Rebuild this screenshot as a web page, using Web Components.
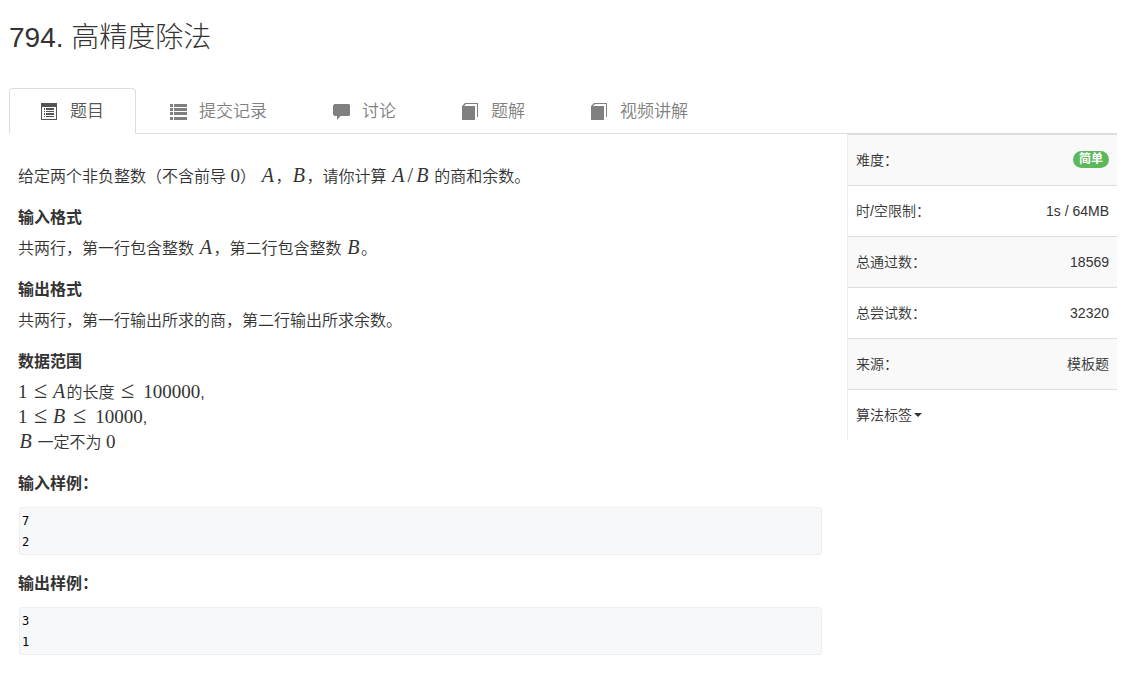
<!DOCTYPE html>
<html lang="zh-CN">
<head>
<meta charset="utf-8">
<meta name="viewport" content="width=device-width, initial-scale=1">
<title>794. 高精度除法</title>
<style>
body {
  margin: 0;
  background: #fff;
  color: #333;
  font-family: "Liberation Sans", "Noto Sans CJK SC", sans-serif;
  text-spacing-trim: space-all;
}
</style>
</head>
<body>
<problem-page></problem-page>

<script>
function define(name, html) {
  const template = document.createElement('template');
  template.innerHTML = html;
  customElements.define(name, class extends HTMLElement {
    constructor() {
      super();
      this.attachShadow({ mode: 'open' }).append(template.content.cloneNode(true));
    }
  });
}

/* Inline math pieces */
define('math-var', `
<style>
:host { display: inline-block; width: 15px; line-height: 16px; font-size: 20px; font-style: italic; font-family: "Liberation Serif", serif; text-align: center; }
</style><slot></slot>`);
define('math-num', `
<style>
:host { display: inline; line-height: 16px; font-size: 19px; font-family: "Liberation Serif", serif; }
</style><slot></slot>`);
define('math-op', `
<style>
:host { display: inline-block; width: 9px; line-height: 16px; font-size: 20px; font-family: "Liberation Serif", serif; text-align: center; }
</style><slot></slot>`);
define('math-rel', `
<style>
:host { display: inline-block; width: 14px; margin: 0 4px 0 6px; line-height: 16px; font-size: 24px; font-family: "Liberation Serif", serif; text-align: center; }
</style><slot></slot>`);

/* Tab icons */
const icons = {
  problem: '<path fill-rule="evenodd" d="M0 0h16v17H0zM1 4v12h14V4z"/><path d="M3 5h1v2H3zM5 5h8v2H5zM3 8h1v1H3zM5 8h8v1H5zM3 10h1v2H3zM5 10h8v2H5zM3 13h1v1H3zM5 13h8v1H5z"/>',
  list: '<path d="M0 1h3v3H0zM4 1h13v3H4zM0 5h3v3H0zM4 5h13v3H4zM0 9h3v3H0zM4 9h13v3H4zM0 14h3v3H0zM4 14h13v3H4z"/>',
  comment: '<path d="M1.500 1h14.500l1.500 1.500v9L16 13H7.500L4 17v-4H1.500L0 11.500v-9z"/>',
  book: '<path d="M3 0h13v14h-1V1H4L2 3h11v14H0V3z"/>'
};
customElements.define('tab-icon', class extends HTMLElement {
  connectedCallback() {
    if (this.shadowRoot) return;
    this.attachShadow({ mode: 'open' }).innerHTML = `
      <style>:host { display: block; width: 17px; height: 18px; } svg { display: block; fill: currentColor; }</style>
      <svg width="17" height="17" viewBox="0 0 17 17" aria-hidden="true">${icons[this.getAttribute('name')]}</svg>`;
  }
});

define('page-tabs', `
<style>
:host { display: block; border-bottom: 1px solid #ddd; }
nav { display: flex; gap: 2px; margin-bottom: -1px; }
a {
  display: flex; align-items: center; gap: 12px;
  padding: 11px 31px 9px;
  border: 1px solid transparent; border-radius: 4px 4px 0 0;
  color: #808080; font-size: 17px; line-height: 24px; font-weight: 350;
  text-decoration: none; white-space: nowrap;
}
a[aria-current] { color: #555; background: #fff; border-color: #ddd #ddd #fff; }
</style>
<nav>
  <a href="#problem" aria-current="page"><tab-icon name="problem"></tab-icon>题目</a>
  <a href="#submissions"><tab-icon name="list"></tab-icon>提交记录</a>
  <a href="#discussion"><tab-icon name="comment"></tab-icon>讨论</a>
  <a href="#solutions"><tab-icon name="book"></tab-icon>题解</a>
  <a href="#video"><tab-icon name="book"></tab-icon>视频讲解</a>
</nav>`);

define('sample-block', `
<style>
:host { display: block; margin: 0 0 0 1px; }
pre {
  margin: 0; padding: 3px 2px 1px; border: 1px solid #eee; border-radius: 3px;
  background: #f6f8fa; color: #000;
  font: 12px/21px "DejaVu Sans Mono", monospace;
}
</style>
<pre><slot></slot></pre>`);

define('problem-statement', `
<style>
:host { display: block; font-size: 16px; line-height: 25px; font-weight: 350; }
h2 { margin: 16px 0 6px; font-size: 16px; line-height: 25px; font-weight: bold; }
h2.sample { margin-bottom: 11px; }
p { margin: 0; }
</style>
<p>给定两个非负整数（不含前导 <math-num>0</math-num>） <math-var>A</math-var>，<math-var>B</math-var>，请你计算 <math-var>A</math-var><math-op>/</math-op><math-var>B</math-var> 的商和余数。</p>
<h2>输入格式</h2>
<p>共两行，第一行包含整数 <math-var>A</math-var>，第二行包含整数 <math-var>B</math-var>。</p>
<h2>输出格式</h2>
<p>共两行，第一行输出所求的商，第二行输出所求余数。</p>
<h2>数据范围</h2>
<p><math-num>1</math-num><math-rel>≤</math-rel><math-var>A</math-var>的长度<math-rel>≤</math-rel><math-num>100000</math-num>,<br>
<math-num>1</math-num><math-rel>≤</math-rel><math-var>B</math-var><math-rel>≤</math-rel><math-num>10000</math-num>,<br>
<math-var>B</math-var> 一定不为 <math-num>0</math-num></p>
<h2 class="sample">输入样例：</h2>
<sample-block>7
2</sample-block>
<h2 class="sample">输出样例：</h2>
<sample-block>3
1</sample-block>`);

define('level-badge', `
<style>
:host { display: inline-block; padding: 0 6px; border-radius: 10px; background: #5cb85c; color: #fff; font-size: 12px; line-height: 17px; font-weight: bold; vertical-align: 2px; }
</style><slot></slot>`);

define('problem-info', `
<style>
:host { display: block; border-left: 1px solid #eee; font-size: 14px; font-weight: 350; }
table { width: 100%; border-collapse: separate; border-spacing: 0; }
th, td { height: 20px; padding: 15px 8px; border-top: 1px solid #ddd; line-height: 20px; font-weight: inherit; text-align: left; }
td { text-align: right; }
tr:nth-child(odd) { background: #f9f9f9; }
tr:last-child { background: none; }
button { display: flex; align-items: center; gap: 2px; padding: 0; border: 0; background: none; color: inherit; font: inherit; line-height: 20px; }
button::after { content: ""; border: 4px solid transparent; border-top-color: currentColor; border-bottom: 0; }
</style>
<table>
  <tbody>
  <tr><th scope="row">难度：</th><td><level-badge>简单</level-badge></td></tr>
  <tr><th scope="row">时/空限制：</th><td>1s / 64MB</td></tr>
  <tr><th scope="row">总通过数：</th><td>18569</td></tr>
  <tr><th scope="row">总尝试数：</th><td>32320</td></tr>
  <tr><th scope="row">来源：</th><td>模板题</td></tr>
  <tr><th scope="row" colspan="2"><button type="button">算法标签</button></th></tr>
  </tbody>
</table>`);

define('problem-page', `
<style>
:host { display: block; padding: 20px 11px 20px 9px; }
h1 { margin: 0 0 32px; font-size: 28px; line-height: 36px; font-weight: 300; }
.columns { display: grid; grid-template-columns: minmax(0, 1fr) 270px; align-items: start; }
problem-statement { padding: 30px 25px 0 9px; }
</style>
<h1>794. 高精度除法</h1>
<page-tabs></page-tabs>
<div class="columns">
  <problem-statement></problem-statement>
  <problem-info></problem-info>
</div>`);
</script>
</body>
</html>
